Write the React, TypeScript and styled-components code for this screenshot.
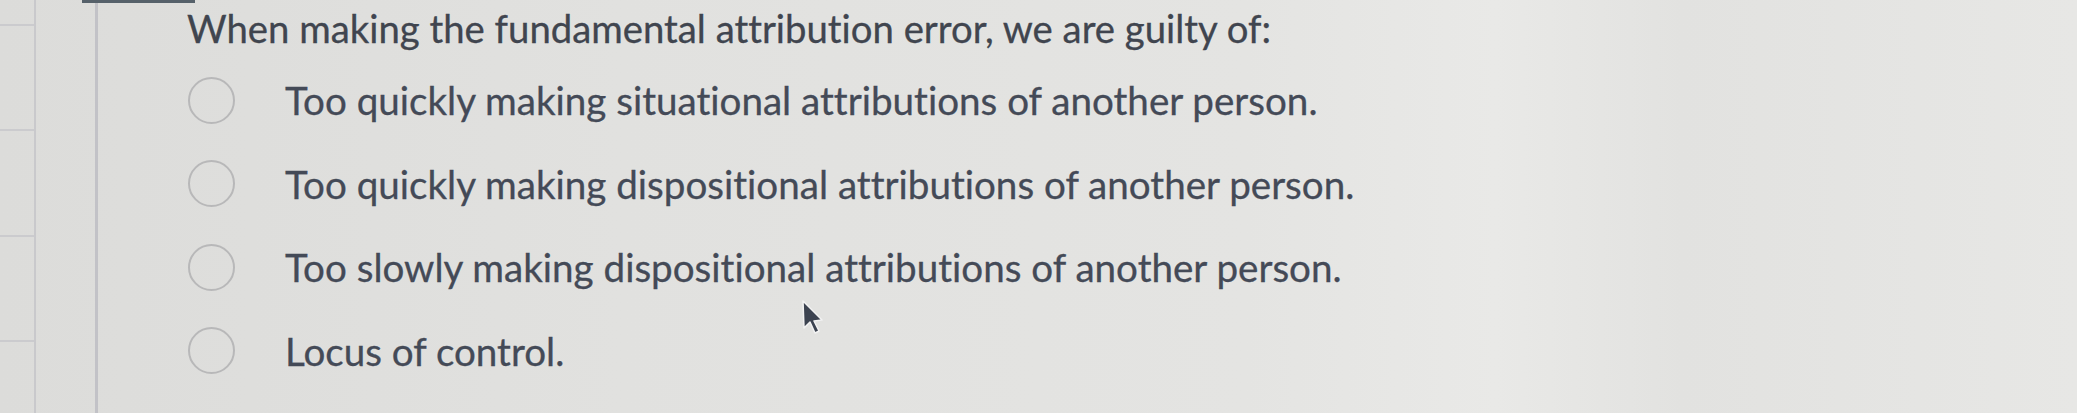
import styled, { createGlobalStyle } from "styled-components";

const GlobalStyle = createGlobalStyle`
    html, body {
        margin: 0;
        padding: 0;
    }
    body {
        font-family: Lato, "Noto Sans", sans-serif;
        font-variant-ligatures: none;
    }
`;

const Page = styled.div`
    position: relative;
    width: 2077px;
    height: 413px;
    overflow: hidden;
    display: flex;
    background: linear-gradient(
        90deg,
        #dcdcda 0%,
        #e1e1df 30%,
        #e4e4e2 60%,
        #e9e9e7 72%,
        #e2e2e0 81%,
        #e7e7e5 100%
    );
`;

const Sidebar = styled.div`
    width: 34px;
    flex-shrink: 0;
    border-right: 2px solid #c9c9cc;
    display: flex;
    flex-direction: column;
`;

const SidebarItem = styled.div<{ $h: number }>`
    height: ${(p) => p.$h}px;
    flex-shrink: 0;
    border-bottom: 2px solid #cbcbce;
`;

const Gutter = styled.div`
    width: 59px;
    flex-shrink: 0;
    border-right: 3px solid #c2c2c7;
`;

const TopTab = styled.div`
    position: absolute;
    left: 82px;
    top: 0;
    width: 113px;
    height: 3px;
    background: #56616a;
`;

const Content = styled.div`
    flex: 1;
    padding: 6px 0 0 89px;
    display: flex;
    flex-direction: column;
`;

const Question = styled.div`
    font-size: 38.3px;
    line-height: 44px;
    color: #40454f;
    -webkit-text-stroke: 0.3px #40454f;
    margin-bottom: 26px;
`;

const Options = styled.div`
    display: flex;
    flex-direction: column;
    gap: 35.5px;
`;

const Option = styled.label`
    display: flex;
    align-items: center;
    height: 48px;
`;

const Radio = styled.span`
    width: 43px;
    height: 43px;
    border-radius: 50%;
    border: 2.8px solid #b8b8b9;
    flex-shrink: 0;
    margin-left: 1px;
    margin-right: 50px;
`;

const OptionText = styled.span`
    font-size: 38.6px;
    line-height: 48px;
    color: #444a57;
    -webkit-text-stroke: 0.3px #444a57;
`;

const Cursor = styled.svg`
    position: absolute;
    left: 801px;
    top: 300px;
    width: 24px;
    height: 38px;
`;

const options = [
    "Too quickly making situational attributions of another person.",
    "Too quickly making dispositional attributions of another person.",
    "Too slowly making dispositional attributions of another person.",
    "Locus of control.",
];

export default function App() {
    return (
        <Page>
            <GlobalStyle />
            <Sidebar>
                <SidebarItem $h={24} />
                <SidebarItem $h={103} />
                <SidebarItem $h={104} />
                <SidebarItem $h={103} />
            </Sidebar>
            <Gutter />
            <TopTab />
            <Content>
                <Question>When making the fundamental attribution error, we are guilty of:</Question>
                <Options>
                    {options.map((text) => (
                        <Option key={text}>
                            <Radio />
                            <OptionText>{text}</OptionText>
                        </Option>
                    ))}
                </Options>
            </Content>
            <Cursor viewBox="0 0 24 38">
                <path
                    d="M2 1 L3 28 L9 22 L14 33 L18 31 L13 21 L21 20 Z"
                    fill="#3c4350"
                    stroke="#f2f2f2"
                    strokeWidth="1.5"
                    strokeLinejoin="round"
                />
            </Cursor>
        </Page>
    );
}
